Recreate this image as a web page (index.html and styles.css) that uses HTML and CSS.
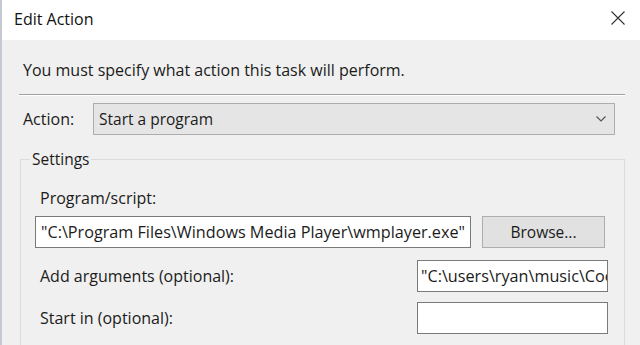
FILE: index.html
```html
<!DOCTYPE html>
<html lang="en">
<head>
  <meta charset="UTF-8" />
  <title>Edit Action</title>
  <link rel="stylesheet" href="styles.css">
</head>
<body>
  <div class="window">
    <div class="titlebar">
      <span class="title">Edit Action</span>
      <svg class="close" width="14" height="14" viewBox="0 0 14 14">
        <path d="M0.5 0.5 L13.5 13.5 M13.5 0.5 L0.5 13.5" stroke="#333" stroke-width="1.1" fill="none"/>
      </svg>
    </div>

    <div class="content">
      <p class="intro">You must specify what action this task will perform.</p>
      <div class="sep"></div>

      <div class="action-row">
        <span class="action-label">Action:</span>
        <div class="combo">
          <span>Start a program</span>
          <svg class="chevron" width="10" height="6" viewBox="0 0 10 6">
            <path d="M0.5 0.5 L5 5 L9.5 0.5" stroke="#555" stroke-width="1.2" fill="none"/>
          </svg>
        </div>
      </div>

      <fieldset class="settings">
        <legend>Settings</legend>
        <div class="settings-body">
          <div class="field-label">Program/script:</div>
          <div class="prog-row">
            <div class="textbox prog">"C:\Program Files\Windows Media Player\wmplayer.exe"</div>
            <button class="browse-btn" type="button">Browse...</button>
          </div>
          <div class="opt-row first">
            <span>Add arguments (optional):</span>
            <div class="textbox small">"C:\users\ryan\music\Cool Song.mp3"</div>
          </div>
          <div class="opt-row">
            <span>Start in (optional):</span>
            <div class="textbox small"></div>
          </div>
        </div>
      </fieldset>
    </div>
  </div>
</body>
</html>
```

FILE: styles.css
```css
body {
  margin: 0;
  width: 640px;
  height: 345px;
  overflow: hidden;
  background: #f0f0f0;
  font-family: 'Segoe UI', 'Open Sans', Arial, sans-serif;
  font-size: 16px;
  color: #1b1b1b;
}
.window {
  height: 345px;
  border-left: 2px solid #c4c9d2;
  box-sizing: border-box;
}
.titlebar {
  height: 40px;
  background: #fff;
  display: flex;
  align-items: center;
  justify-content: space-between;
  padding: 0 15px 0 12px;
}
.title {
  font-size: 16px;
  color: #111;
  margin-top: -2px;
}
.close { margin-top: -4px; }
.content {
  padding: 0 15px 0 17px;
}
.intro {
  margin: 20px 0 0 4px;
  line-height: 20px;
}
.sep {
  margin: 14px 0 0 0;
  border-top: 1px solid #a0a0a0;
  border-bottom: 1px solid #fff;
}
.action-row {
  display: flex;
  align-items: center;
  margin-top: 7px;
}
.action-label {
  width: 70px;
  padding-left: 4px;
}
.combo {
  width: 522px;
  height: 32px;
  box-sizing: border-box;
  background: #e5e5e5;
  border: 1px solid #adadad;
  display: flex;
  align-items: center;
  justify-content: space-between;
  padding: 0 8px 0 5px;
  font-size: 15.5px;
}
.settings {
  margin: 14px 0 0 1px;
  padding: 0;
  border: 1px solid #dcdcdc;
  border-bottom: none;
  height: 200px;
}
.settings legend {
  margin-left: 9px;
  padding: 0 2px;
  line-height: 20px;
  font-size: 15.5px;
}
.settings-body {
  padding: 0 16px 0 14px;
}
.field-label {
  margin: 19px 0 0 5px;
  line-height: 20px;
}
.prog-row {
  display: flex;
  align-items: center;
  gap: 11px;
  margin-top: 8px;
}
.textbox {
  height: 32px;
  box-sizing: border-box;
  background: #fff;
  border: 1px solid #7a7a7a;
  padding: 0 5px;
  line-height: 30px;
  font-size: 16.2px;
  white-space: nowrap;
  overflow: hidden;
}
.prog { width: 436px; }
.browse-btn {
  width: 123px;
  height: 32px;
  background: #e1e1e1;
  border: 1px solid #adadad;
  font-family: inherit;
  font-size: 15.5px;
  color: #1b1b1b;
  padding: 0;
}
.opt-row {
  display: flex;
  align-items: center;
  justify-content: space-between;
  margin-top: 10px;
  padding-left: 5px;
}
.opt-row.first { margin-top: 12px; }
.small { width: 191px; padding: 0 3px; }
```
